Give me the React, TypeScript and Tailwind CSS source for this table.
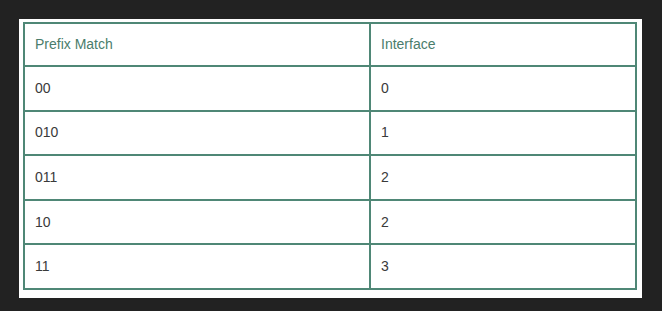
import React from 'react';

const rows = [
  { prefix: '00', iface: '0' },
  { prefix: '010', iface: '1' },
  { prefix: '011', iface: '2' },
  { prefix: '10', iface: '2' },
  { prefix: '11', iface: '3' },
];

const App = () => {
  return (
    <div className="w-[662px] h-[311px] bg-[#222222] pt-[19px] pl-[19px] font-['Liberation_Sans',Arial,sans-serif]">
      <div className="w-[623px] h-[279px] bg-white pl-[4px] pt-[3px]">
        <table className="w-[614px] border-collapse border-2 border-[#4f8776] text-[14px]">
          <thead>
            <tr className="h-[43px]">
              <th className="w-[346px] border-2 border-[#4f8776] px-[10px] text-left font-normal text-[#4a7d6c]">
                Prefix Match
              </th>
              <th className="border-2 border-[#4f8776] px-[10px] text-left font-normal text-[#4a7d6c]">
                Interface
              </th>
            </tr>
          </thead>
          <tbody>
            {rows.map((row, i) => (
              <tr key={i} className="h-[44.6px]">
                <td className="border-2 border-[#4f8776] px-[10px] text-[#3a3a3a]">{row.prefix}</td>
                <td className="border-2 border-[#4f8776] px-[10px] text-[#3a3a3a]">{row.iface}</td>
              </tr>
            ))}
          </tbody>
        </table>
      </div>
    </div>
  );
};

export default App;
